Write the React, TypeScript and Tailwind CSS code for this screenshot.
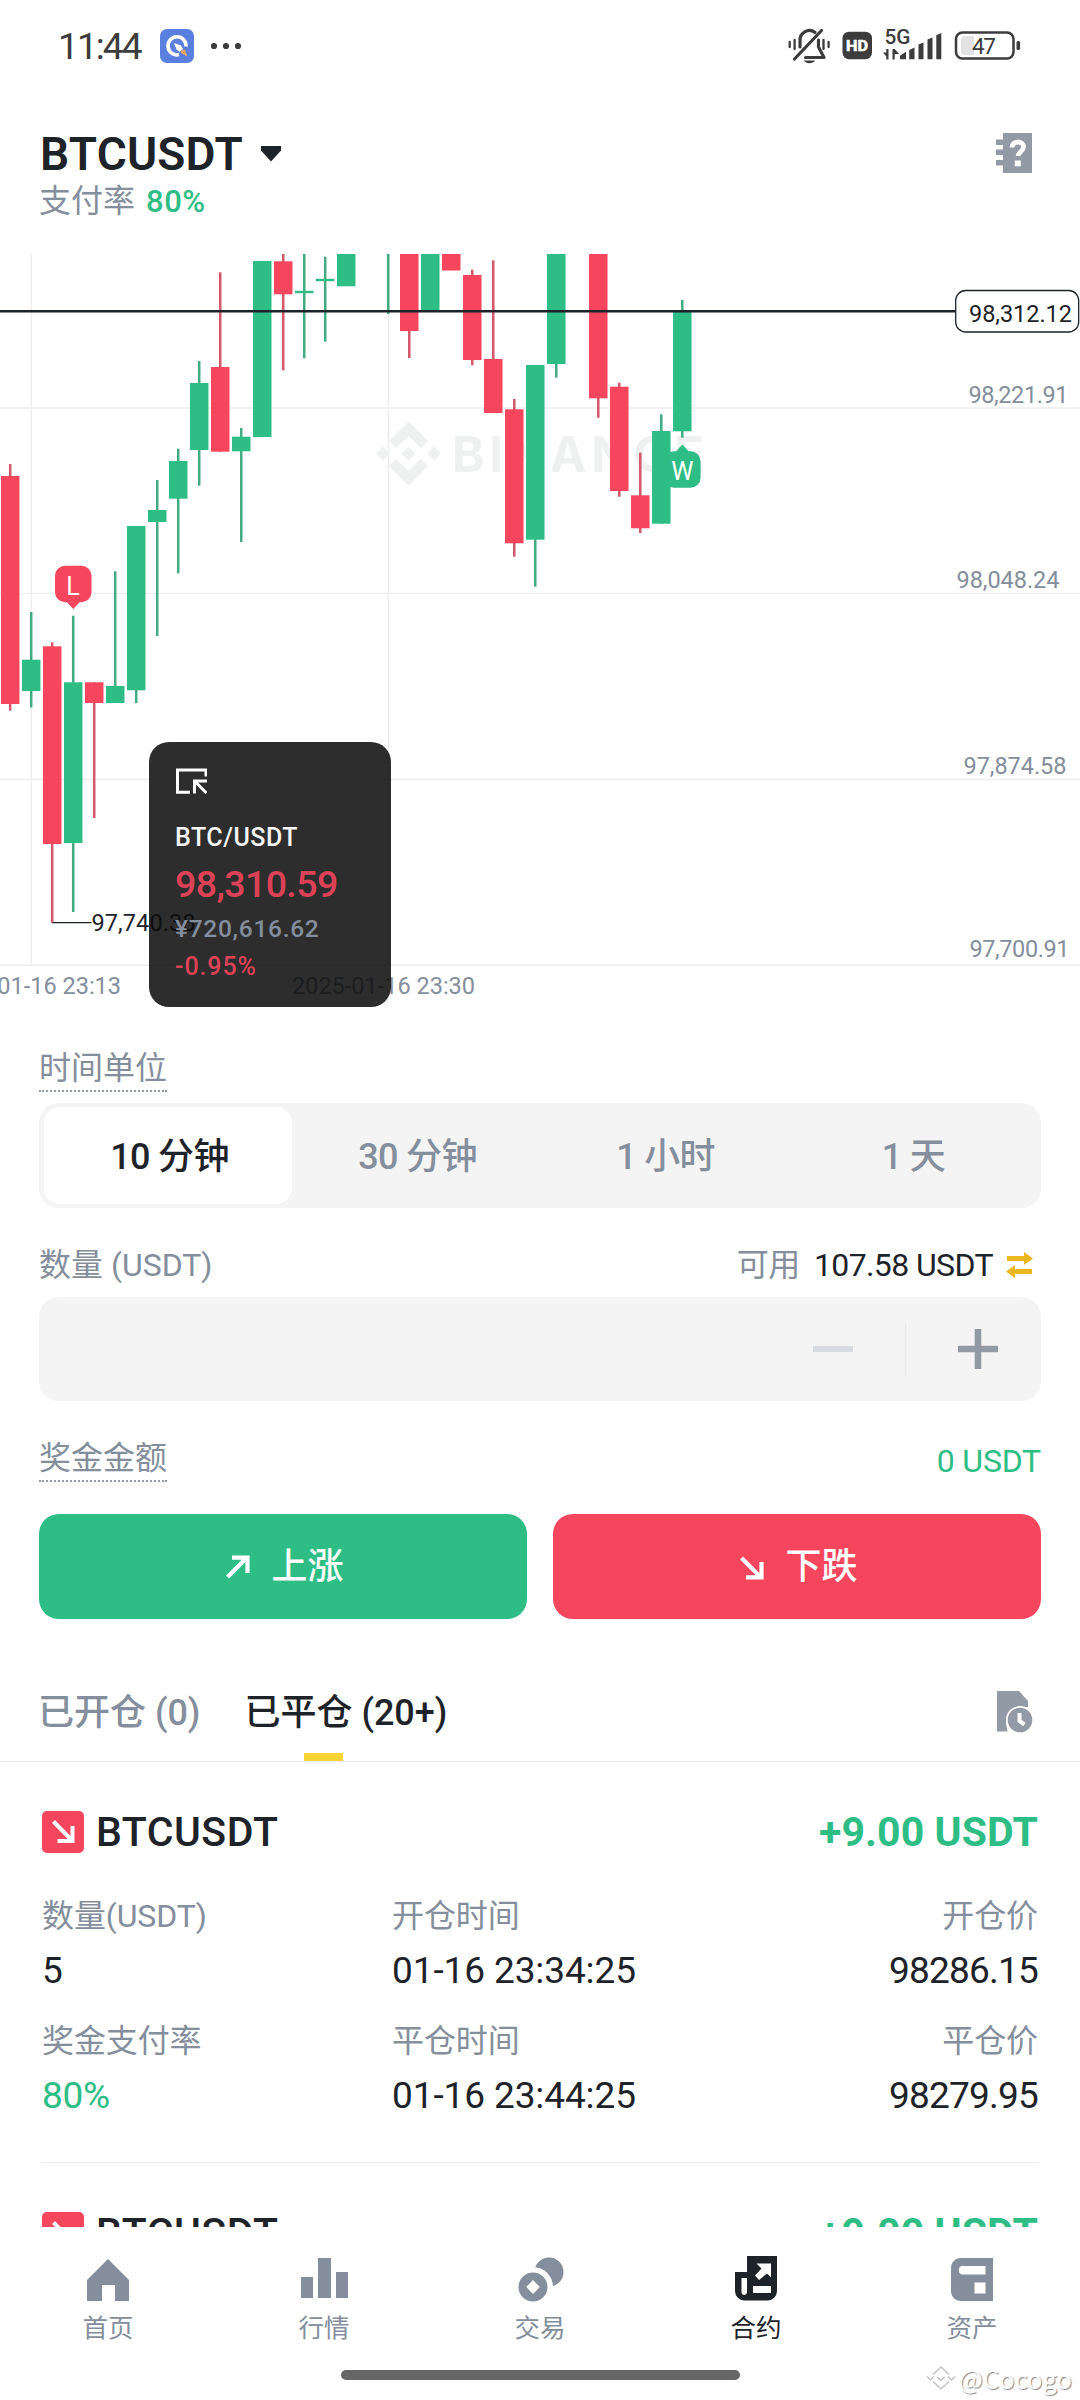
import React, { useState } from 'react';
import clsx from 'clsx';

const GREEN = '#2EBD85';
const RED = '#F6465D';

interface Candle {
  i: number;
  up: boolean;
  body?: [number, number];
  wick?: [number, number];
}

const TOP = 254;

const candles: Candle[] = [
  { i: 0, up: false, body: [476, 704], wick: [464, 710.7] },
  { i: 1, up: true, body: [659.7, 691], wick: [612, 707.5] },
  { i: 2, up: false, body: [646.3, 844], wick: [642.3, 922.7] },
  { i: 3, up: true, body: [682.3, 843], wick: [615.7, 912] },
  { i: 4, up: false, body: [682.3, 703], wick: [682.3, 818] },
  { i: 5, up: true, body: [686, 703], wick: [571.3, 703] },
  { i: 6, up: true, body: [526, 690.3], wick: [526, 703] },
  { i: 7, up: true, body: [510, 522], wick: [480, 636] },
  { i: 8, up: true, body: [461, 498.7], wick: [448.7, 573.3] },
  { i: 9, up: true, body: [383, 450], wick: [361, 485.7] },
  { i: 10, up: false, body: [367, 451.7], wick: [272.3, 451.7] },
  { i: 11, up: true, body: [436.7, 451.3], wick: [428, 542] },
  { i: 12, up: true, body: [261, 437] },
  { i: 13, up: false, body: [261.3, 294.3], wick: [TOP, 370.3] },
  { i: 14, up: true, body: [290.8, 293.2], wick: [TOP, 358.3] },
  { i: 15, up: true, body: [278.8, 281.2], wick: [256.7, 341.7] },
  { i: 16, up: true, body: [TOP, 286.3] },
  { i: 18, up: true, wick: [TOP, 314] },
  { i: 19, up: false, body: [TOP, 331], wick: [TOP, 358] },
  { i: 20, up: true, body: [TOP, 311] },
  { i: 21, up: false, body: [TOP, 270.5] },
  { i: 22, up: false, body: [275, 360], wick: [269.7, 365.3] },
  { i: 23, up: false, body: [359, 413], wick: [260.3, 413] },
  { i: 24, up: false, body: [409.3, 543.3], wick: [399, 556.7] },
  { i: 25, up: true, body: [365, 539.7], wick: [365, 586.7] },
  { i: 26, up: true, body: [TOP, 364], wick: [TOP, 377.7] },
  { i: 28, up: false, body: [TOP, 398.3], wick: [TOP, 417.7] },
  { i: 29, up: false, body: [386.7, 491], wick: [382.7, 496.7] },
  { i: 30, up: false, body: [495.3, 528.3], wick: [452.7, 533] },
  { i: 31, up: true, body: [431, 523.7], wick: [414.3, 523.7] },
  { i: 32, up: true, body: [311, 431.3], wick: [300, 437.7] },
];

const priceLabels = [
  { text: '98,221.91', x: 968.5, y: 403, w: 100 },
  { text: '98,048.24', x: 956.5, y: 588, w: 103 },
  { text: '97,874.58', x: 963.5, y: 774, w: 103 },
  { text: '97,700.91', x: 969.5, y: 957, w: 100 },
];

function StatusBar() {
  return (
    <div className="flex h-[92px] items-center justify-between pr-[58px] pl-[58px] text-[#3c3c3c]">
      <div className="flex items-center">
        <span className="w-[102px] text-[37px] leading-none tracking-[-1.9px] whitespace-nowrap">11:44</span>
        <svg className="h-[34px] w-[34px]" viewBox="0 0 34 34">
          <rect width="34" height="34" rx="7" fill="#5A7FDE" />
          <path d="M19 25.6A9 9 0 1 1 26 17.5" fill="none" stroke="#fff" strokeWidth="3.6" />
          <path d="M14 14l7 2.6 2 3.6-3.6 2.6-2.8-2.2z" fill="#fff" />
          <path d="M21 21.4l4-1 2.4 7-6.6-3.4z" fill="#E8A365" />
        </svg>
        <svg className="ml-[16px] h-[8px] w-[34px]" viewBox="0 0 34 8" fill="#3c3c3c">
          <circle cx="4" cy="4" r="3.1" />
          <circle cx="16" cy="4" r="3.1" />
          <circle cx="28" cy="4" r="3.1" />
        </svg>
      </div>
      <svg className="h-[40px] w-[236px]" viewBox="786 26 236 40">
        {/* muted bell */}
        <g fill="none" stroke="#3c3c3c" strokeWidth="3.2" strokeLinecap="round" strokeLinejoin="round">
          <path d="M800 47V41a9.5 9.5 0 0 1 15-8.6" />
          <path d="M794.5 59L821.5 30.5" />
          <path d="M818.500 40v7l5.500 10.500h-18.500" />
          <path d="M789.700 42v5M794.600 40v9M828.600 42v5M823.500 40v9" strokeWidth="2.300" />
        </g>
        <path d="M804 60.500h11c-2 3.600-9 3.600-11 0z" fill="#3c3c3c" />
        <rect x="842.500" y="31.700" width="29.500" height="27.500" rx="6.500" fill="#3c3c3c" />
        <text x="846" y="51" className="font-bold" fontSize="15" textLength="22" lengthAdjust="spacingAndGlyphs" fill="#fff" stroke="#fff" strokeWidth=".6">HD</text>
        <text x="884.500" y="43.800" className="font-medium" fontSize="19.500" textLength="26" lengthAdjust="spacingAndGlyphs" fill="#3c3c3c">5G</text>
        <path d="M888.500 49v10.500h-2.200v-3l-3.300-4h3.300V49zM892.500 59.500V49h2.200l4.400 5h-4.400v5.500z" fill="#3c3c3c" />
        <path d="M900 59.300v-3.500l6-4v7.500zM909.200 59.300V50l5.300-2.500v11.800zM918.500 59.300V44.500l5-2v16.800zM927.500 59.300V39.500l5-2v21.800zM936.300 59.300v-24l5-2.300v26.300z" fill="#3c3c3c" />
        <rect x="956" y="32.500" width="57.500" height="26" rx="6.500" fill="none" stroke="#3c3c3c" strokeWidth="2.500" />
        <path d="M965 36h9v19h-9a4 4 0 0 1-4-4V40a4 4 0 0 1 4-4z" fill="#E2E2E2" />
        <rect x="1016.500" y="41" width="3.600" height="9" rx="1.600" fill="#3c3c3c" />
        <text x="972" y="53.800" fontSize="22.500" textLength="24" lengthAdjust="spacing" fill="#3c3c3c">47</text>
      </svg>
    </div>
  );
}

function Header() {
  return (
    <header className="h-[162px] pt-9 pr-[48px] pl-[39px]">
      <div className="flex h-[52px] items-center">
        <h1 className="pl-px text-[46px] leading-[52px] font-semibold tracking-[0.2px] text-[#1E2329]">BTCUSDT</h1>
        <svg className="ml-[17px] h-[16px] w-[22px]" viewBox="0 0 22 16" fill="#1E2329">
          <path d="M1 0h20v4.500L11 15.500 1 4.500z" />
        </svg>
        <svg className="mt-[-2px] ml-auto h-[40px] w-[36px]" viewBox="0 0 36 40" fill="#929AA5">
          <path d="M7 0h29v40H7v-7.500H0v-5.500h7v-5H0v-5.500h7v-4.500H0V6.500h7z" />
          <path d="M16 14.500c0-7.200 11.500-7.200 11.500-.6 0 4.600-5.300 4.600-5.300 9.200" fill="none" stroke="#fff" strokeWidth="4.800" />
          <rect x="18.800" y="27.500" width="6" height="5.800" fill="#fff" />
        </svg>
      </div>
      <div className="mt-px flex h-10 items-center text-[32px] leading-10 text-[#848E9C]">
        <span>支付率</span>
        <span className="mt-px ml-[11px] text-[31px] font-medium tracking-[0.5px] text-[#2EBD85]">80%</span>
      </div>
    </header>
  );
}

function Chart() {
  return (
    <section className="relative h-[774px] overflow-hidden">
      <svg className="block h-[774px] w-[1080px]" viewBox="0 254 1080 774">
        <g stroke="#EDEEEF" strokeWidth="1.500">
          <path d="M0 408H1080M0 593.500H1080M0 779.500H1080M0 965.200H1080M31.300 254V965M388.300 254V965" />
        </g>

        {/* logo behind the candles */}
        <g fill="#EFF1F0">
          <path d="M408.500 421.500l19.700 19.500-7.300 7.200-12.400-12.300-12.400 12.300-7.300-7.200z" />
          <path d="M408.500 485.500l19.700-19.500-7.300-7.200-12.400 12.300-12.400-12.300-7.300 7.200z" />
          <path d="M408.500 446.400l7 7-7 7-7-7zM383 446.400l7 7-7 7-7-7zM434 446.400l7 7-7 7-7-7z" />
          <text x="452" y="471.500" fontSize="49" textLength="252" lengthAdjust="spacing" className="font-['Inter'] font-bold">BINANCE</text>
        </g>

        {candles.map((c) => {
          const cx = 10.2 + 21.003 * c.i;
          const fill = c.up ? GREEN : RED;
          return (
            <g key={c.i} fill={fill}>
              {c.wick && (
                <rect x={cx - 1.25} y={c.wick[0]} width="2.5" height={c.wick[1] - c.wick[0]} fill={c.up ? '#43AB82' : '#D4576B'} />
              )}
              {c.body && <rect x={cx - 9.25} y={c.body[0]} width="18.5" height={c.body[1] - c.body[0]} />}
            </g>
          );
        })}

        <path d="M0 311.300H956" stroke="#1E2329" strokeWidth="2.500" />
        <rect x="955.700" y="290.500" width="123" height="41.500" rx="10" fill="#fff" stroke="#1E2329" strokeWidth="1.300" />
        <text x="969" y="322" fontSize="23.500" textLength="103" lengthAdjust="spacing" fill="#1E2329">98,312.12</text>
        {priceLabels.map((p) => (
          <text key={p.text} x={p.x} y={p.y} fontSize="23.500" textLength={p.w} lengthAdjust="spacing" fill="#848E9C">{p.text}</text>
        ))}

        {/* win / loss markers */}
        <path d="M65 565.700h16.500a10 10 0 0 1 10 10v16.500a10 10 0 0 1-10 10h-2L73.300 609l-6.200-6.800H65a10 10 0 0 1-10-10v-16.500a10 10 0 0 1 10-10z" fill={RED} />
        <text x="73" y="595" fontSize="25" textAnchor="middle" fill="#fff">L</text>
        <path d="M674 451.200h2.200l6.200-6.700 6.200 6.700h2a10 10 0 0 1 10 10v16.500a10 10 0 0 1-10 10H674a10 10 0 0 1-10-10v-16.500a10 10 0 0 1 10-10z" fill={GREEN} />
        <text x="682.300" y="479.500" fontSize="25" textAnchor="middle" fill="#fff">W</text>

        <path d="M52.200 922.700H91.500" stroke="#1E2329" strokeWidth="1.300" />
        <text x="91.500" y="930.700" fontSize="23.500" textLength="104" lengthAdjust="spacing" fill="#1E2329">97,740.38</text>
        <text x="-62" y="993.700" fontSize="23.500" textLength="183" lengthAdjust="spacing" fill="#848E9C">2025-01-16 23:13</text>
        <text x="292" y="993.700" fontSize="23.500" textLength="183" lengthAdjust="spacing" fill="#848E9C">2025-01-16 23:30</text>
      </svg>

      {/* floating ticker */}
      <div className="absolute top-[488px] left-[149px] h-[265px] w-[242px] rounded-[20px] bg-[rgba(11,11,11,0.86)] pt-[26px] pl-[26px] whitespace-nowrap">
        <svg className="h-[26px] w-[32px]" viewBox="0 0 32 26" fill="none" stroke="#fff" strokeWidth="3">
          <path d="M15 24.300H2.500V2H31v6.500" />
          <path d="M19.500 25.500V13H32M20 13.500L31.500 25" />
        </svg>
        <div className="mt-[28px] h-[32px] text-[25px] leading-[32px] font-medium tracking-[0.5px] text-[#F5F5F5]">BTC/USDT</div>
        <div className="mt-[10px] h-[40px] text-[37.500px] leading-[40px] font-medium tracking-[-0.6px] text-[#F6465D]/90">98,310.59</div>
        <div className="mt-[10px] h-[30px] text-[24.500px] leading-[30px] font-medium tracking-[0.7px] text-[#848E9C]">¥720,616.62</div>
        <div className="mt-[8px] h-[30px] text-[25px] leading-[30px] font-medium tracking-[0.9px] text-[#F6465D]/90">-0.95%</div>
      </div>
    </section>
  );
}

function DottedLabel({ children }: { children: React.ReactNode }) {
  return (
    <span className="block h-[43px] border-b-2 border-dotted border-[#929AA5] text-[32px] leading-[38px] text-[#848E9C]">
      {children}
    </span>
  );
}

const units = ['10 分钟', '30 分钟', '1 小时', '1 天'];

function OrderForm() {
  const [unit, setUnit] = useState(0);

  return (
    <section className="pt-[21px] pr-[39px] pl-[39px]">
      <div className="flex">
        <DottedLabel>时间单位</DottedLabel>
      </div>
      <div className="mt-[11px] grid h-[105px] grid-cols-4 rounded-[20px] bg-[#F4F4F4] px-[5px] py-[4px]">
        {units.map((u, idx) => (
          <button
            key={u}
            onClick={() => setUnit(idx)}
            className={clsx(
              'rounded-[16px] pt-[2px] pl-[3px] text-[36px] leading-none font-medium tracking-[-0.7px]',
              idx === unit ? 'bg-white text-[#1E2329]' : 'text-[#848E9C]'
            )}
          >
            {u}
          </button>
        ))}
      </div>

      <div className="mt-[35px] flex h-[44px] items-center text-[32px] text-[#848E9C]">
        <span>数量 (USDT)</span>
        <span className="ml-auto tracking-[-0.4px]">可用</span>
        <span className="ml-[14px] tracking-[-0.6px] text-[#1E2329]">107.58 USDT</span>
        <svg className="mr-[8px] ml-[13px] h-[26px] w-[27px]" viewBox="0 0 27 26" fill="#EAB71F">
          <path d="M1 4h17V0l9 6.500-9 6.500V9H1zM26 17H9V13l-9 6.500L9 26v-4h17z" />
        </svg>
      </div>
      <div className="mt-[10px] flex h-[104px] items-center rounded-[20px] bg-[#F4F4F4]">
        <span className="ml-[774px] h-[6px] w-[40px] bg-[#D7DADF]" />
        <span className="ml-[52px] h-[53px] w-px bg-[#E6E8EA]" />
        <svg className="ml-[52px] h-[40px] w-[40px]" viewBox="0 0 40 40" fill="#929AA5">
          <path d="M16.700 0h6.600v16.700H40v6.600H23.300V40h-6.600V23.300H0v-6.600h16.700z" />
        </svg>
      </div>

      <div className="mt-[38px] flex h-[43px] justify-between">
        <DottedLabel>奖金金额</DottedLabel>
        <span className="text-[32px] leading-[45px] tracking-[-0.2px] text-[#2EBD85]">0 USDT</span>
      </div>
      <div className="mt-8 grid h-[105px] grid-cols-2 gap-[26px] text-[36px] font-medium text-white">
        <button className="flex items-center justify-center rounded-[20px] bg-[#2EBD85] pl-[4px]">
          <svg className="mr-[21px] h-[24px] w-[24px]" viewBox="0 0 24 24" fill="none" stroke="#fff" strokeWidth="4.200">
            <path d="M1.500 22L20.500 3M6 2.600h15.500V18" />
          </svg>
          上涨
        </button>
        <button className="flex items-center justify-center rounded-[20px] bg-[#F6465D] pl-[4px]">
          <svg className="mt-[2px] mr-[21px] h-[24px] w-[24px]" viewBox="0 0 24 24" fill="none" stroke="#fff" strokeWidth="4.200">
            <path d="M1.500 2L20.500 21M6 21.400h15.500V6" />
          </svg>
          下跌
        </button>
      </div>
    </section>
  );
}

function Tabs() {
  return (
    <div className="flex h-[143px] items-start border-b border-[#E9EBED] pt-[54px] pr-[47px] pl-[38px] text-[36px] leading-[80px] font-medium">
      <div className="text-[#848E9C]">已开仓 (0)</div>
      <div className="ml-[44px] flex flex-col items-center text-[#1E2329]">
        <span className="h-[80px]">已平仓 (20+)</span>
        <span className="mr-[44px] h-[8px] w-[39px] bg-[#FCD535]" />
      </div>
      <svg className="mt-[18px] ml-auto h-[42px] w-[36px]" viewBox="0 0 36 42" fill="#929AA5">
        <path d="M0 0h22l9 10v6h-6.500L12 24l-3 8 1.500 8.500H0z" />
        <circle cx="23" cy="29" r="14" fill="#fff" />
        <circle cx="23" cy="29" r="12.300" />
        <path d="M22.500 22v8l5 3.500" fill="none" stroke="#fff" strokeWidth="4" />
      </svg>
    </div>
  );
}

interface Position {
  profit: string;
  amount: string;
  openTime: string;
  openPrice: string;
  closeTime: string;
  closePrice: string;
}

const positions: Position[] = [
  { profit: '+9.00 USDT', amount: '5', openTime: '01-16 23:34:25', openPrice: '98286.15', closeTime: '01-16 23:44:25', closePrice: '98279.95' },
  { profit: '+9.00 USDT', amount: '5', openTime: '01-16 23:34:25', openPrice: '98286.15', closeTime: '01-16 23:44:25', closePrice: '98279.95' },
];

const labelRow = 'grid h-10 grid-cols-[350px_350px_1fr] text-[32px] leading-10 tracking-[-0.1px] text-[#848E9C]';
const valueRow = 'mt-[13px] grid h-11 grid-cols-[350px_350px_1fr] text-[37px] leading-11 text-[#1E2329]';

function PositionCard({ p }: { p: Position }) {
  return (
    <div className="mx-[42px] border-b border-[#EAECEF] pt-[49px] pb-[44px]">
      <div className="flex h-[42px] items-center">
        <svg className="h-[42px] w-[42px]" viewBox="0 0 42 42">
          <rect width="42" height="42" rx="5" fill={RED} />
          <path d="M11.500 10.500L29 28.500M15.500 30h15V15" fill="none" stroke="#fff" strokeWidth="4" />
        </svg>
        <span className="ml-[12px] text-[41px] leading-[42px] font-medium tracking-[0.5px] text-[#1E2329]">BTCUSDT</span>
        <span className="ml-auto text-[41px] leading-[42px] font-bold tracking-[0.1px] text-[#2EBD85]">{p.profit}</span>
      </div>
      <div className={clsx(labelRow, 'mt-[43px]')}>
        <span>数量(USDT)</span>
        <span>开仓时间</span>
        <span className="text-right">开仓价</span>
      </div>
      <div className={valueRow}>
        <span>{p.amount}</span>
        <span className="tracking-[-0.1px]">{p.openTime}</span>
        <span className="text-right tracking-[-0.8px]">{p.openPrice}</span>
      </div>
      <div className={clsx(labelRow, 'mt-[28px]')}>
        <span>奖金支付率</span>
        <span>平仓时间</span>
        <span className="text-right">平仓价</span>
      </div>
      <div className={valueRow}>
        <span className="tracking-[-0.3px] text-[#2EBD85]">80%</span>
        <span className="tracking-[-0.1px]">{p.closeTime}</span>
        <span className="text-right tracking-[-0.8px]">{p.closePrice}</span>
      </div>
    </div>
  );
}

const navItems = [
  {
    label: '首页',
    icon: <path d="M23 4L44 25v21H30V30H17v16H2V25z" />,
  },
  {
    label: '行情',
    icon: <path d="M0 22h12v21H0zM17 3h13v40H17zM35 17h12v26H35z" />,
  },
  {
    label: '交易',
    icon: (
      <>
        <circle cx="32" cy="17" r="14.500" />
        <circle cx="16" cy="32" r="20" fill="#fff" />
        <path fillRule="evenodd" d="M16 17.500a14.500 14.500 0 1 1 0 29a14.500 14.500 0 1 1 0-29zM16 25l-6.800 7 6.800 7 6.800-7z" />
      </>
    ),
  },
  {
    label: '合约',
    active: true,
    icon: (
      <>
        <path d="M14 1h30v35a9.500 9.500 0 0 1-9.500 9.500h-23A9.500 9.500 0 0 1 2 36V17h12z" />
        <path d="M8.500 23h5.500v14c0 4-5.500 4-5.500 0zM20 31h18v7H20zM23.500 8.500H38V22.500l-4-4-8 6.500-4-4.500 6.500-7z" fill="#fff" />
      </>
    ),
  },
  {
    label: '资产',
    icon: (
      <>
        <path d="M12 3h32v43H12C6 46 2 41.500 2 36V13C2 7.500 6 3 12 3z" />
        <path d="M13.500 11h23v8.500h-23c-5 0-5-8.500 0-8.500zM25.500 27.500h11v11h-11z" fill="#fff" />
      </>
    ),
  },
];

function BottomNav() {
  return (
    <nav className="relative h-[173px] bg-white pt-[28px]">
      <div className="grid grid-cols-5">
        {navItems.map((n) => (
          <div key={n.label} className={clsx('flex flex-col items-center', n.active ? 'text-[#1E2329]' : 'text-[#848E9C]')}>
            <svg className="h-[47px] w-[47px]" viewBox="0 0 47 47" fill="currentColor">{n.icon}</svg>
            <span className="mt-[8px] text-[25.500px] leading-[36px]">{n.label}</span>
          </div>
        ))}
      </div>
      <div className="mx-auto mt-[24px] h-[10px] w-[399px] rounded-full bg-[#666]" />

      <div className="absolute right-[8px] bottom-[4px] flex items-center gap-[3px]">
        <svg className="h-[26px] w-[30px]" viewBox="0 0 30 26" fill="none" stroke="#BDBDBD" strokeWidth="1.200">
          <path d="M7 9.500L15 2l8 7.500M7 16.500l8 7.500 8-7.500M1 11.500l3.500 3.500L8 11.500M11.500 12l3.500 3.500 3.500-3.500M22 11.500l3.500 3.500 3.500-3.500" />
        </svg>
        <span className="font-['Noto_Sans_CJK_SC'] text-[25.500px] leading-[36px] text-white [text-shadow:1px_1px_1px_#888]">@Cocogo</span>
      </div>
    </nav>
  );
}

export default function App() {
  return (
    <div className="h-[2400px] w-[1080px] overflow-hidden bg-white font-['Roboto','Noto_Sans_CJK_SC',sans-serif]">
      <StatusBar />
      <Header />
      <Chart />
      <OrderForm />
      <Tabs />
      <div className="h-[465px] overflow-hidden">
        {positions.map((p, idx) => (
          <PositionCard key={idx} p={p} />
        ))}
      </div>
      <BottomNav />
    </div>
  );
}
